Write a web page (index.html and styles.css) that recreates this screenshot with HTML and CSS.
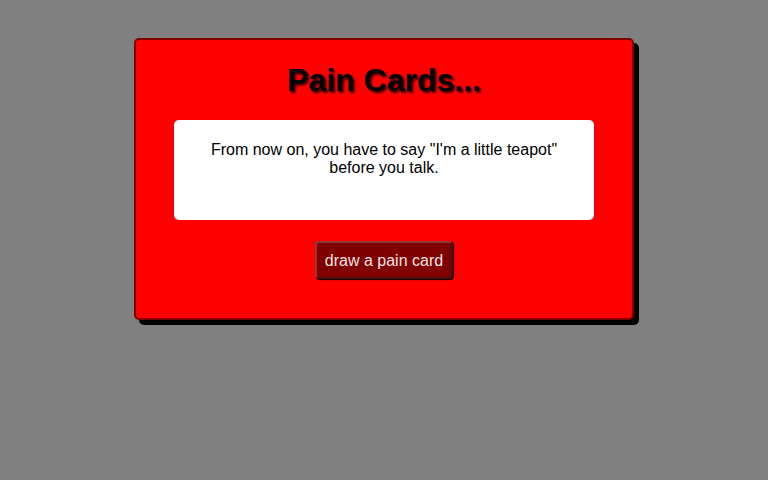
FILE: index.html
```html
<!DOCTYPE html>
<html lang="en">
<head>
    <meta charset="UTF-8">
    <title>Pain Cards</title>
    <meta name="viewport" content="width=device-width, initial-scale=1.0">
    <link rel="stylesheet" href="styles.css">
</head>
<body>
    <div class="card-table">
        <h1>Pain Cards...</h1>
        <div class="pain-card" id="painCard">
            From now on, you have to say "I'm a little teapot" before you talk.
        </div>
        <button class="draw-button">draw a pain card</button>
    </div>
</body>
</html>
```

FILE: styles.css
```css
body {
    margin: 0;
    padding: 38px 0;
    background-color: #808080;
    font-family: 'Liberation Sans', Arial, sans-serif;
}

.card-table {
    box-sizing: border-box;
    width: 500px;
    margin: 0 auto;
    padding: 0 38px 39px;
    background-color: #ff0000;
    border: 2px solid #800000;
    border-radius: 5px;
    box-shadow: 5px 5px 0 #000;
    text-align: center;
}

h1 {
    margin: 0;
    padding: 22px 0 21px;
    font-size: 32px;
    line-height: 37px;
    text-shadow: 2px 2px 2px #400000;
}

.pain-card {
    box-sizing: border-box;
    height: 100px;
    padding: 21px 30px;
    background-color: #fff;
    border-radius: 5px;
    font-size: 16px;
    line-height: 18px;
    color: #000;
}

.draw-button {
    margin-top: 21px;
    padding: 9px 8px 7px;
    background-color: #800000;
    color: #f4e4e4;
    font-family: inherit;
    font-size: 16px;
    border: 2px solid #4a1010;
    border-top-color: #8a3a3a;
    border-left-color: #8a3a3a;
    border-radius: 4px;
    box-shadow: 1px 1px 1px #000;
    cursor: pointer;
}
```
